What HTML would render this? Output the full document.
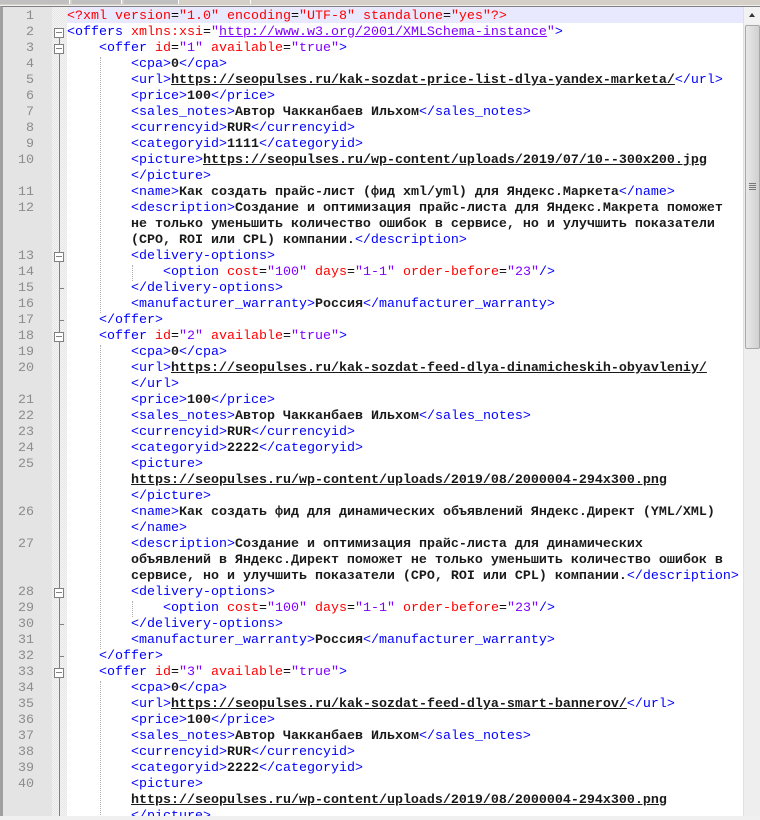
<!DOCTYPE html>
<html><head><meta charset="utf-8"><style>
*{margin:0;padding:0;box-sizing:border-box}
body{width:760px;height:820px;overflow:hidden;background:#f0f0f0;position:relative;font-family:"Liberation Mono","DejaVu Sans Mono",monospace}
#tabs{position:absolute;left:0;top:0;width:760px;height:5px;background:#d4d0c8}
#tabs i{position:absolute;top:0;height:4px;background:#c0c0c0;border-right:1px solid #fff}
#ed{position:absolute;left:0;top:6px;width:760px;height:810px;background:#fff;border-top:1px solid #808080;border-left:3px solid #a0a0a0;overflow:hidden}
#gut{position:absolute;left:0;top:0;width:49px;height:100%;background:#e4e4e4}
#fold{position:absolute;left:49px;top:0;width:15px;height:100%;background-color:#f4f4f4;background-image:linear-gradient(45deg,#e6e6e6 25%,transparent 25%,transparent 75%,#e6e6e6 75%),linear-gradient(45deg,#e6e6e6 25%,transparent 25%,transparent 75%,#e6e6e6 75%);background-size:2px 2px;background-position:0 0,1px 1px}
.ln{position:absolute;left:0;width:31px;text-align:right;color:#8c8c8c;font-size:13.33px;line-height:16px;height:16px}
.r{position:absolute;left:64px;height:16px;line-height:16px;font-size:13.33px;white-space:pre;color:#1a1a1a;font-weight:bold}
.t{color:#0000ff;font-weight:normal}.a{color:#ff0000;font-weight:normal}.v{color:#8000ff;font-weight:normal}.e{color:#000;font-weight:normal}
.u{text-decoration:underline}
.cur{position:absolute;left:64px;top:0;width:676px;height:16px;background:#e8e8ff}
.fl{position:absolute;left:56px;width:1px;background:#808080}
.bx{position:absolute;left:51px;width:10px;height:10px;border:1px solid #808080;background:#fff}
.bx:after{content:"";position:absolute;left:1px;top:3px;width:6px;height:1px;background:#808080}
.tk{position:absolute;left:56px;width:5px;height:1px;background:#808080}
.g{position:absolute;width:0;border-left:1px dotted #b0b0b0}
#sb{position:absolute;left:740px;top:0;width:17px;height:100%;background:#eeeeee;border-left:1px solid #e0e0e0}
#up{position:absolute;left:0;top:0;width:17px;height:17px;background:#f2f2f2}
#up:after{content:"";position:absolute;left:5px;top:6px;border:3px solid transparent;border-bottom:4px solid #333;border-top:0}
#th{position:absolute;left:1px;top:18px;width:15px;height:324px;background:linear-gradient(90deg,#e8e8e8,#d0d0d0);border:1px solid #a8a8a8;border-radius:2px}
#th i{position:absolute;left:3px;width:7px;height:1px;background:#777}
#c{position:absolute;left:0;top:2px;width:740px;height:820px}
</style></head><body>
<div id="tabs"><i style="left:0;width:70px"></i><i style="left:72px;width:50px"></i><i style="left:124px;width:55px"></i><i style="left:250px;width:1px"></i></div>
<div id="ed">
<div id="gut"></div><div id="fold"></div>
<div class="cur"></div>
<div class="fl" style="top:23px;height:790px"></div>
<div class="bx" style="top:21px"></div>
<div class="bx" style="top:37px"></div>
<div class="bx" style="top:245px"></div>
<div class="tk" style="top:281px"></div>
<div class="tk" style="top:313px"></div>
<div class="bx" style="top:325px"></div>
<div class="bx" style="top:581px"></div>
<div class="tk" style="top:617px"></div>
<div class="tk" style="top:649px"></div>
<div class="bx" style="top:661px"></div>
<div class="g" style="left:97px;top:50px;height:256px"></div>
<div class="g" style="left:97px;top:338px;height:304px"></div>
<div class="g" style="left:97px;top:674px;height:140px"></div>
<div class="g" style="left:129px;top:258px;height:16px"></div>
<div class="g" style="left:129px;top:594px;height:16px"></div>
<div id="sb"><div id="up"></div><div id="th"><i style="top:157px"></i><i style="top:159px"></i><i style="top:161px"></i><i style="top:163px"></i></div></div>
<div id="c"></div>
</div>
<script>
var L=[
[1,'<span class="a">&lt;?xml version</span><span class="e">=</span><span class="a">"1.0" encoding</span><span class="e">=</span><span class="a">"UTF-8" standalone</span><span class="e">=</span><span class="a">"yes"?&gt;</span>'],
[2,'<span class="t">&lt;offers </span><span class="a">xmlns:xsi</span><span class="e">=</span><span class="v">"<span class="u">http://www.w3.org/2001/XMLSchema-instance</span>"</span><span class="t">&gt;</span>'],
[3,'    <span class="t">&lt;offer </span><span class="a">id</span><span class="e">=</span><span class="v">"1"</span><span class="a"> available</span><span class="e">=</span><span class="v">"true"</span><span class="t">&gt;</span>'],
[4,'        <span class="t">&lt;cpa&gt;</span>0<span class="t">&lt;/cpa&gt;</span>'],
[5,'        <span class="t">&lt;url&gt;</span><span class="u">https://seopulses.ru/kak-sozdat-price-list-dlya-yandex-marketa/</span><span class="t">&lt;/url&gt;</span>'],
[6,'        <span class="t">&lt;price&gt;</span>100<span class="t">&lt;/price&gt;</span>'],
[7,'        <span class="t">&lt;sales_notes&gt;</span>Автор Чакканбаев Ильхом<span class="t">&lt;/sales_notes&gt;</span>'],
[8,'        <span class="t">&lt;currencyid&gt;</span>RUR<span class="t">&lt;/currencyid&gt;</span>'],
[9,'        <span class="t">&lt;categoryid&gt;</span>1111<span class="t">&lt;/categoryid&gt;</span>'],
[10,'        <span class="t">&lt;picture&gt;</span><span class="u">https://seopulses.ru/wp-content/uploads/2019/07/10--300x200.jpg</span>'],
[0,'        <span class="t">&lt;/picture&gt;</span>'],
[11,'        <span class="t">&lt;name&gt;</span>Как создать прайс-лист (фид xml/yml) для Яндекс.Маркета<span class="t">&lt;/name&gt;</span>'],
[12,'        <span class="t">&lt;description&gt;</span>Создание и оптимизация прайс-листа для Яндекс.Макрета поможет'],
[0,'        не только уменьшить количество ошибок в сервисе, но и улучшить показатели'],
[0,'        (CPO, ROI или CPL) компании.<span class="t">&lt;/description&gt;</span>'],
[13,'        <span class="t">&lt;delivery-options&gt;</span>'],
[14,'            <span class="t">&lt;option </span><span class="a">cost</span><span class="e">=</span><span class="v">"100"</span><span class="a"> days</span><span class="e">=</span><span class="v">"1-1"</span><span class="a"> order-before</span><span class="e">=</span><span class="v">"23"</span><span class="t">/&gt;</span>'],
[15,'        <span class="t">&lt;/delivery-options&gt;</span>'],
[16,'        <span class="t">&lt;manufacturer_warranty&gt;</span>Россия<span class="t">&lt;/manufacturer_warranty&gt;</span>'],
[17,'    <span class="t">&lt;/offer&gt;</span>'],
[18,'    <span class="t">&lt;offer </span><span class="a">id</span><span class="e">=</span><span class="v">"2"</span><span class="a"> available</span><span class="e">=</span><span class="v">"true"</span><span class="t">&gt;</span>'],
[19,'        <span class="t">&lt;cpa&gt;</span>0<span class="t">&lt;/cpa&gt;</span>'],
[20,'        <span class="t">&lt;url&gt;</span><span class="u">https://seopulses.ru/kak-sozdat-feed-dlya-dinamicheskih-obyavleniy/</span>'],
[0,'        <span class="t">&lt;/url&gt;</span>'],
[21,'        <span class="t">&lt;price&gt;</span>100<span class="t">&lt;/price&gt;</span>'],
[22,'        <span class="t">&lt;sales_notes&gt;</span>Автор Чакканбаев Ильхом<span class="t">&lt;/sales_notes&gt;</span>'],
[23,'        <span class="t">&lt;currencyid&gt;</span>RUR<span class="t">&lt;/currencyid&gt;</span>'],
[24,'        <span class="t">&lt;categoryid&gt;</span>2222<span class="t">&lt;/categoryid&gt;</span>'],
[25,'        <span class="t">&lt;picture&gt;</span>'],
[0,'        <span class="u">https://seopulses.ru/wp-content/uploads/2019/08/2000004-294x300.png</span>'],
[0,'        <span class="t">&lt;/picture&gt;</span>'],
[26,'        <span class="t">&lt;name&gt;</span>Как создать фид для динамических объявлений Яндекс.Директ (YML/XML)'],
[0,'        <span class="t">&lt;/name&gt;</span>'],
[27,'        <span class="t">&lt;description&gt;</span>Создание и оптимизация прайс-листа для динамических'],
[0,'        объявлений в Яндекс.Директ поможет не только уменьшить количество ошибок в'],
[0,'        сервисе, но и улучшить показатели (CPO, ROI или CPL) компании.<span class="t">&lt;/description&gt;</span>'],
[28,'        <span class="t">&lt;delivery-options&gt;</span>'],
[29,'            <span class="t">&lt;option </span><span class="a">cost</span><span class="e">=</span><span class="v">"100"</span><span class="a"> days</span><span class="e">=</span><span class="v">"1-1"</span><span class="a"> order-before</span><span class="e">=</span><span class="v">"23"</span><span class="t">/&gt;</span>'],
[30,'        <span class="t">&lt;/delivery-options&gt;</span>'],
[31,'        <span class="t">&lt;manufacturer_warranty&gt;</span>Россия<span class="t">&lt;/manufacturer_warranty&gt;</span>'],
[32,'    <span class="t">&lt;/offer&gt;</span>'],
[33,'    <span class="t">&lt;offer </span><span class="a">id</span><span class="e">=</span><span class="v">"3"</span><span class="a"> available</span><span class="e">=</span><span class="v">"true"</span><span class="t">&gt;</span>'],
[34,'        <span class="t">&lt;cpa&gt;</span>0<span class="t">&lt;/cpa&gt;</span>'],
[35,'        <span class="t">&lt;url&gt;</span><span class="u">https://seopulses.ru/kak-sozdat-feed-dlya-smart-bannerov/</span><span class="t">&lt;/url&gt;</span>'],
[36,'        <span class="t">&lt;price&gt;</span>100<span class="t">&lt;/price&gt;</span>'],
[37,'        <span class="t">&lt;sales_notes&gt;</span>Автор Чакканбаев Ильхом<span class="t">&lt;/sales_notes&gt;</span>'],
[38,'        <span class="t">&lt;currencyid&gt;</span>RUR<span class="t">&lt;/currencyid&gt;</span>'],
[39,'        <span class="t">&lt;categoryid&gt;</span>2222<span class="t">&lt;/categoryid&gt;</span>'],
[40,'        <span class="t">&lt;picture&gt;</span>'],
[0,'        <span class="u">https://seopulses.ru/wp-content/uploads/2019/08/2000004-294x300.png</span>'],
[0,'        <span class="t">&lt;/picture&gt;</span>']
];
var h='';
L.forEach(function(r,i){var y=i*16;if(r[0])h+='<div class="ln" style="top:'+y+'px">'+r[0]+'</div>';h+='<div class="r" style="top:'+y+'px">'+r[1]+'</div>';});
document.getElementById('c').innerHTML=h;
</script>
</body></html>
